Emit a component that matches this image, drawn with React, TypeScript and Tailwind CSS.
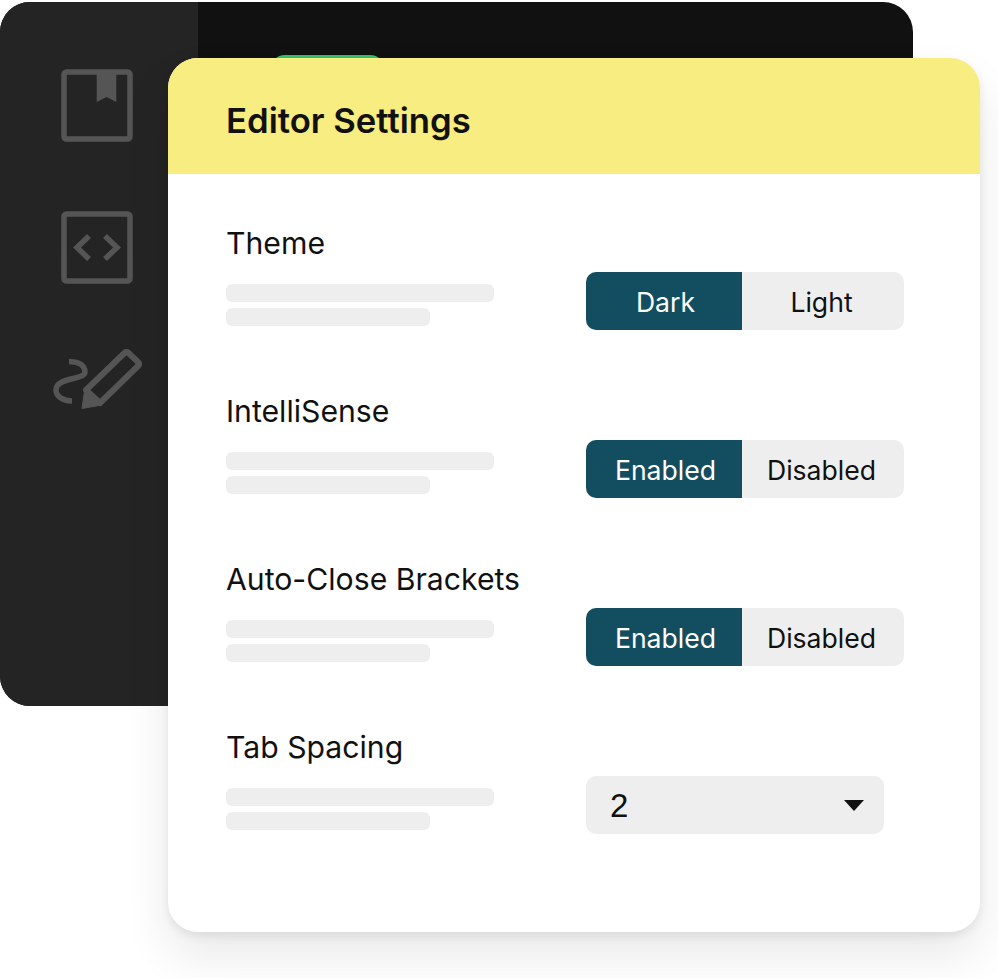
const rows = [
  { label: "Theme", a: "Dark", b: "Light" },
  { label: "IntelliSense", a: "Enabled", b: "Disabled" },
  { label: "Auto-Close Brackets", a: "Enabled", b: "Disabled" },
];

function Placeholder() {
  return (
    <div className="mt-[24px] flex flex-col gap-[6px]">
      <div className="h-[18px] w-[268px] rounded-[6px] bg-[#eeeeee]" />
      <div className="h-[18px] w-[204px] rounded-[6px] bg-[#eeeeee]" />
    </div>
  );
}

function Label({ children }: { children: string }) {
  return <div className="-mt-px mb-px h-[34px] text-[30.2px] leading-[34px] text-[#111111]">{children}</div>;
}

export default function App() {
  return (
    <div className="relative h-[978px] w-[998px] overflow-hidden bg-white font-['Inter',sans-serif]">
      <div className="mt-[2px] flex h-[704px] w-[913px] overflow-hidden rounded-[30px] bg-[#111111]">
        <div className="flex h-full w-[198px] flex-col items-center bg-[#242424] pt-[67px] pr-[4px]">
          <svg width="72" height="73" viewBox="0 0 72 73" fill="none">
            <rect x="3" y="3" width="66" height="67" rx="2.5" stroke="#555555" strokeWidth="5.5" />
            <path d="M35.7 3H55.3V33L45.5 28L35.7 33Z" fill="#555555" />
          </svg>
          <svg className="mt-[69px]" width="72" height="73" viewBox="0 0 72 73" fill="none">
            <rect x="3" y="3" width="66" height="67" rx="2.5" stroke="#555555" strokeWidth="5.5" />
            <path d="M28 25L16 36.5L28 48M44 25L56 36.5L44 48" stroke="#555555" strokeWidth="5.5" />
          </svg>
          <svg className="mt-[65px]" width="90" height="60" viewBox="0 0 90 60" fill="none">
            <path d="M34 41L73 3.5Q74.5 2.5 76 3.5L86.5 13.5Q87.5 15 86.5 16.5L48 54Z" stroke="#555555" strokeWidth="6" strokeLinejoin="round" />
            <path d="M30 59.5L33 39L50 56Z" fill="#555555" stroke="#555555" strokeWidth="1" strokeLinejoin="round" />
            <path d="M17 12.7C27 12 33 17 33 23C33 31 4 28 4 41C4 48 12 52 20 52" stroke="#555555" strokeWidth="5.5" />
          </svg>
        </div>
        <div className="flex-1 pl-[72px] pt-[53px]">
          <div className="h-[30px] w-[115px] rounded-[20px] bg-[#30c46d]" />
        </div>
      </div>

      <div className="absolute left-[168px] top-[58px] h-[874px] w-[812px] overflow-hidden rounded-[30px] bg-white shadow-[0_4px_10px_rgba(0,0,0,0.08),0_24px_48px_rgba(0,0,0,0.09)]">
        <div className="flex h-[116px] items-center bg-[#f8ed80] pl-[58px] pt-[8px]">
          <h1 className="text-[34.7px] font-semibold text-[#111111]">Editor Settings</h1>
        </div>
        <div className="flex flex-col gap-[66px] pl-[58px] pt-[53px]">
          {rows.map((r) => (
            <div key={r.label} className="flex h-[102px] items-start">
              <div className="w-[360px]">
                <Label>{r.label}</Label>
                <Placeholder />
              </div>
              <div className="mt-[45px] flex h-[58px] w-[318px] overflow-hidden rounded-[10px] text-[26.6px]">
                <div className="flex w-[156px] items-center justify-center bg-[#134d60] pl-[3px] pt-[3px] text-white">{r.a}</div>
                <div className="flex w-[162px] items-center justify-center bg-[#eeeeee] pr-[3px] pt-[3px] text-[#111111]">{r.b}</div>
              </div>
            </div>
          ))}
          <div className="flex h-[102px] items-start">
            <div className="w-[360px]">
              <Label>Tab Spacing</Label>
              <Placeholder />
            </div>
            <div className="mt-[45px] flex h-[58px] w-[298px] items-center justify-between rounded-[10px] bg-[#eeeeee] pl-[24px] pr-[20px] font-['Liberation_Sans',sans-serif] text-[33px] text-[#111111]">
              <span className="pt-px">2</span>
              <svg width="20" height="11" viewBox="0 0 20 11"><path d="M0 0H20L10 11Z" fill="#111111" /></svg>
            </div>
          </div>
        </div>
      </div>
    </div>
  );
}
